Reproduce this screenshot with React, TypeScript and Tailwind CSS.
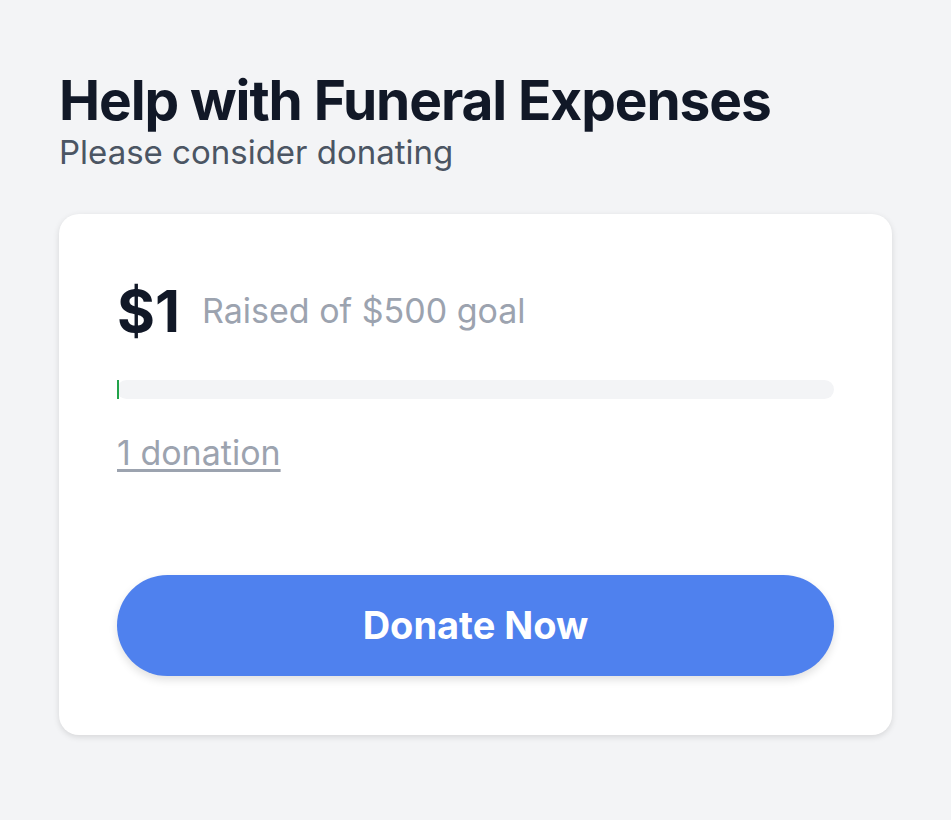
export default function App() {
  const raised = 1
  const goal = 500

  return (
    <div className="min-h-[820px] w-full bg-[#f3f4f6] font-['Inter',sans-serif]">
      <div className="px-[59px] pt-[70px] pb-[84px]">
        <h1 className="text-[55px] leading-[60px] font-bold tracking-[-0.02em] text-[#111827]">
          Help with Funeral Expenses
        </h1>
        <p className="mt-[2px] text-[33px] leading-[40px] text-[#4b5563]">Please consider donating</p>

        <div className="mt-[42px] rounded-[20px] bg-white px-[58px] pt-[62px] pb-[59px] shadow-[0_2px_6px_rgba(0,0,0,0.12)]">
          <div className="flex items-center gap-[22px]">
            <span className="text-[58px] leading-[70px] font-bold text-[#111827]">${raised}</span>
            <span className="text-[34px] leading-[44px] text-[#9ca3af]">Raised of ${goal} goal</span>
          </div>

          <div className="mt-[34px] h-[19px] w-full rounded-full bg-[#f3f4f6]">
            <div className="h-full w-[2px] bg-[#22a34a]" />
          </div>

          <a href="#" className="mt-[34px] inline-block text-[34px] leading-[40px] text-[#9ca3af] underline underline-offset-[4px]">
            1 donation
          </a>

          <button className="mt-[102px] flex h-[101px] w-full items-center justify-center rounded-full bg-[#4f81ee] text-[38px] font-bold text-white shadow-[0_4px_8px_rgba(0,0,0,0.12)]">
            Donate Now
          </button>
        </div>
      </div>
    </div>
  )
}
